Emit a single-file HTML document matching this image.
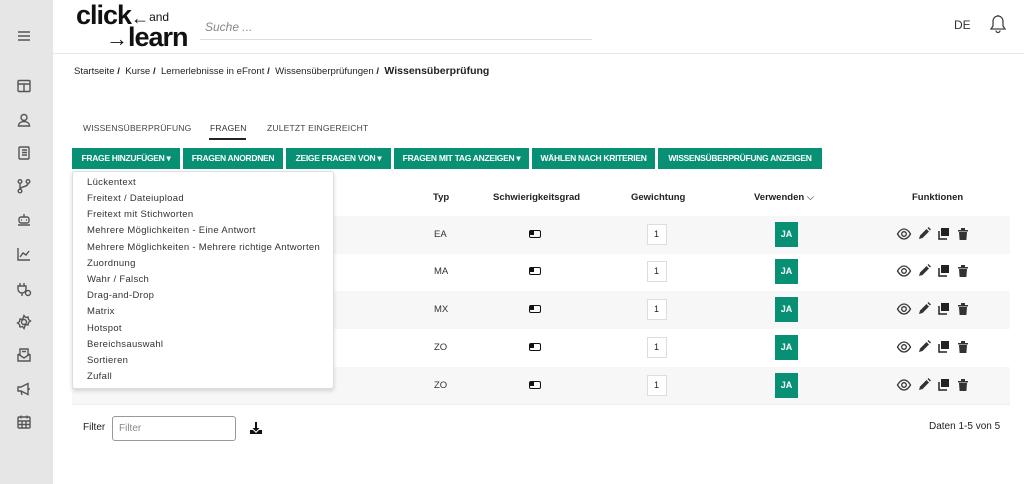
<!DOCTYPE html>
<html><head><meta charset="utf-8"><style>
*{box-sizing:border-box;margin:0;padding:0}
body{width:1024px;height:484px;overflow:hidden;background:#fff;font-family:"Liberation Sans",sans-serif;position:relative;color:#222}
.abs{position:absolute}
#side{left:0;top:0;width:53px;height:484px;background:#e6e6e6}
#side svg{position:absolute;left:16px;width:16px;height:16px;fill:none;stroke:#555;stroke-width:1.4}
#hdr{left:53px;top:0;width:971px;height:54px;border-bottom:1px solid #e8e8e8}
.btn{position:absolute;top:148px;height:21px;background:#079073;color:#fff;font-size:8.5px;font-weight:bold;line-height:21px;text-align:center;letter-spacing:-0.3px}
.dd{left:72px;top:171px;width:262px;height:218px;border:1px solid #ddd;border-radius:3px;background:#fff;box-shadow:0 2px 4px rgba(0,0,0,.15)}
.dd div{position:absolute;left:14px;font-size:9.5px;color:#333;letter-spacing:0.3px}
.band{left:72px;width:938px;height:38px;background:#f7f7f7}
.th{top:192px;font-size:9.5px;font-weight:bold;color:#222}
.cell{font-size:9.5px;color:#333}
.inp{width:20px;height:21px;border:1px solid #ddd;background:#fff;font-size:9px;line-height:19px;padding-left:6px}
.ja{width:23px;height:25px;background:#079073;color:#fff;font-size:9px;font-weight:bold;text-align:center;line-height:25px}
.tab{top:123px;font-size:8.5px;letter-spacing:0.2px;color:#444}
.logo{font-size:27px;font-weight:bold;letter-spacing:-1px;line-height:27px;color:#111}
</style></head><body>
<div id="side" class="abs">
<svg style="top:28px" viewBox="0 0 16 16"><path d="M2 4h12M2 8h12M2 12h12"/></svg>
<svg style="top:78px" viewBox="0 0 16 16"><rect x="2" y="2.5" width="12" height="11" rx="1"/><path d="M2 6h12M8 6v7.5"/></svg>
<svg style="top:112px" viewBox="0 0 16 16"><circle cx="8" cy="5.5" r="3"/><path d="M2.5 14c0-3 2.5-4.5 5.5-4.5s5.5 1.5 5.5 4.5z"/></svg>
<svg style="top:145px" viewBox="0 0 16 16"><rect x="3" y="2" width="10" height="12" rx="1"/><path d="M6 5h5M6 7.5h5M6 10h5"/></svg>
<svg style="top:178px" viewBox="0 0 16 16"><circle cx="4" cy="3.5" r="1.8"/><circle cx="12" cy="3.5" r="1.8"/><circle cx="4" cy="13" r="1.8"/><path d="M4 5.3v5.9M12 5.3c0 4-8 3-8 6"/></svg>
<svg style="top:212px" viewBox="0 0 16 16"><rect x="3" y="5" width="10" height="6" rx="2"/><path d="M8 2v3M2 13h12M5 8h1M10 8h1"/></svg>
<svg style="top:246px" viewBox="0 0 16 16"><path d="M2 2v12h12M4 11l3-4 3 2 3-4"/></svg>
<svg style="top:281px" viewBox="0 0 16 16"><path d="M4 2v3M8 2v3M2 5h8v3a4 4 0 0 1-8 0zM6 12v3"/><circle cx="12" cy="12" r="2.5"/></svg>
<svg style="top:314px" viewBox="0 0 16 16"><circle cx="8" cy="8" r="2.5"/><path d="M8 1.5l1.5 2 2.5-.5.5 2.5 2 1.5-2 1.5-.5 2.5-2.5-.5L8 14.5l-1.5-2-2.5.5-.5-2.5-2-1.5 2-1.5.5-2.5 2.5.5z"/></svg>
<svg style="top:347px" viewBox="0 0 16 16"><path d="M2 7v7h12V7M2 7l6 4 6-4M4 8V2h8v6M6 4.5h4"/></svg>
<svg style="top:381px" viewBox="0 0 16 16"><path d="M2 6h3l7-3.5v11L5 10H2zM5 10l1 4M13 7v2"/></svg>
<svg style="top:414px" viewBox="0 0 16 16"><rect x="2" y="3" width="12" height="11" rx="1"/><path d="M2 7h12M5 1.5v3M11 1.5v3M2 10.5h12M6 7v7M10 7v7"/></svg>
</div>
<div id="hdr" class="abs"></div>
<div class="abs logo" style="left:76px;top:2px">click<span style="font-size:18px;letter-spacing:0">←</span><span style="font-size:12px;font-weight:normal;letter-spacing:0;position:relative;top:-3px">and</span></div>
<div class="abs logo" style="left:106px;top:24px"><span style="font-size:22px;letter-spacing:0">→</span>learn</div>
<div class="abs" style="left:205px;top:20px;font-size:12px;font-style:italic;color:#888">Suche ...</div>
<div class="abs" style="left:200px;top:39px;width:392px;height:1px;background:#ddd"></div>
<div class="abs" style="left:954px;top:18px;font-size:12px;color:#333">DE</div>
<svg class="abs" style="left:989px;top:14px" width="18" height="20" viewBox="0 0 18 20" fill="none" stroke="#444" stroke-width="1.3"><path d="M9 2c-3 0-5 2.5-5 5.5V12l-2 3h14l-2-3V7.5C14 4.5 12 2 9 2zM7 16.5a2 2 0 0 0 4 0M9 1v1"/></svg>
<div class="abs" style="left:74px;top:65px;font-size:9.6px;color:#222">Startseite <b>/</b> &nbsp;Kurse <b>/</b> &nbsp;Lernerlebnisse in eFront <b>/</b> &nbsp;Wissensüberprüfungen <b>/</b> &nbsp;<span style="font-size:10.5px;font-weight:bold">Wissensüberprüfung</span></div>
<div class="abs tab" style="left:83px">WISSENSÜBERPRÜFUNG</div>
<div class="abs tab" style="left:210px;color:#333">FRAGEN</div>
<div class="abs" style="left:209px;top:138px;width:37px;height:2px;background:#222"></div>
<div class="abs tab" style="left:267px">ZULETZT EINGEREICHT</div>
<div class="btn" style="left:72px;width:108px">FRAGE HINZUFÜGEN ▾</div>
<div class="btn" style="left:183px;width:100px">FRAGEN ANORDNEN</div>
<div class="btn" style="left:286px;width:105px">ZEIGE FRAGEN VON ▾</div>
<div class="btn" style="left:394px;width:135px">FRAGEN MIT TAG ANZEIGEN ▾</div>
<div class="btn" style="left:532px;width:123px">WÄHLEN NACH KRITERIEN</div>
<div class="btn" style="left:658px;width:164px">WISSENSÜBERPRÜFUNG ANZEIGEN</div>
<div class="abs band" style="top:216px"></div>
<div class="abs band" style="top:291px"></div>
<div class="abs band" style="top:367px"></div>
<div class="abs" style="left:72px;top:404px;width:938px;height:1px;background:#eee"></div>
<div class="abs th" style="left:433px">Typ</div>
<div class="abs th" style="left:493px">Schwierigkeitsgrad</div>
<div class="abs th" style="left:631px">Gewichtung</div>
<div class="abs th" style="left:754px">Verwenden <span style="font-weight:normal">⌵</span></div>
<div class="abs th" style="left:912px">Funktionen</div>
<div id="rows"></div>
<script>
var ys=[234,271,309,347,385],t=["EA","MA","MX","ZO","ZO"],h="";
ys.forEach(function(y,i){
h+='<div class="abs cell" style="left:434px;top:'+(y-5)+'px;line-height:11px">'+t[i]+'</div>';
h+='<div class="abs" style="left:529px;top:'+(y-4)+'px;width:12px;height:8px;border:1.8px solid #111;border-radius:2px"><div style="width:4px;height:4px;background:#111"></div></div>';
h+='<div class="abs inp" style="left:647px;top:'+(y-10)+'px">1</div>';
h+='<div class="abs ja" style="left:775px;top:'+(y-12)+'px">JA</div>';
h+='<svg class="abs" style="left:896px;top:'+(y-8)+'px" width="76" height="16" viewBox="0 0 76 16"><g fill="none" stroke="#333" stroke-width="1.3"><path d="M1.5 8c2-3.5 4-5 6.5-5s4.5 1.5 6.5 5c-2 3.5-4 5-6.5 5S3.5 11.5 1.5 8z"/><circle cx="8" cy="8" r="2.3"/></g><path fill="#333" d="M23 13l1-3.5 6.5-6.5 2.5 2.5-6.5 6.5zM31.5 2l1-1 2.5 2.5-1 1z"/><rect x="45" y="2" width="8" height="8" fill="#222"/><path d="M43 5v8h8" fill="none" stroke="#222" stroke-width="1.5"/><path fill="#333" d="M62 4h10v1.5H62zM65 2h4v2h-4zM63 6h8l-.6 8h-6.8z"/></svg>';
});
document.getElementById('rows').innerHTML=h;
</script>
<div class="abs dd">
<div style="top:5px">Lückentext</div>
<div style="top:21px">Freitext / Dateiupload</div>
<div style="top:37px">Freitext mit Stichworten</div>
<div style="top:53px">Mehrere Möglichkeiten - Eine Antwort</div>
<div style="top:70px">Mehrere Möglichkeiten - Mehrere richtige Antworten</div>
<div style="top:86px">Zuordnung</div>
<div style="top:102px">Wahr / Falsch</div>
<div style="top:118px">Drag-and-Drop</div>
<div style="top:134px">Matrix</div>
<div style="top:151px">Hotspot</div>
<div style="top:167px">Bereichsauswahl</div>
<div style="top:183px">Sortieren</div>
<div style="top:199px">Zufall</div>
</div>
<div class="abs" style="left:83px;top:422px;font-size:10px;color:#222">Filter</div>
<div class="abs" style="left:112px;top:416px;width:124px;height:25px;border:1px solid #999;border-radius:3px;font-size:10px;color:#888;padding:6px 0 0 6px">Filter</div>
<svg class="abs" style="left:249px;top:421px" width="14" height="14" viewBox="0 0 14 14"><path fill="#111" d="M6 1h2v6h2.5L7 10.5 3.5 7H6zM1 9h3l3 3 3-3h3v4H1z"/></svg>
<div class="abs" style="left:929px;top:421px;font-size:10px;color:#222">Daten 1-5 von 5</div>
</body></html>
